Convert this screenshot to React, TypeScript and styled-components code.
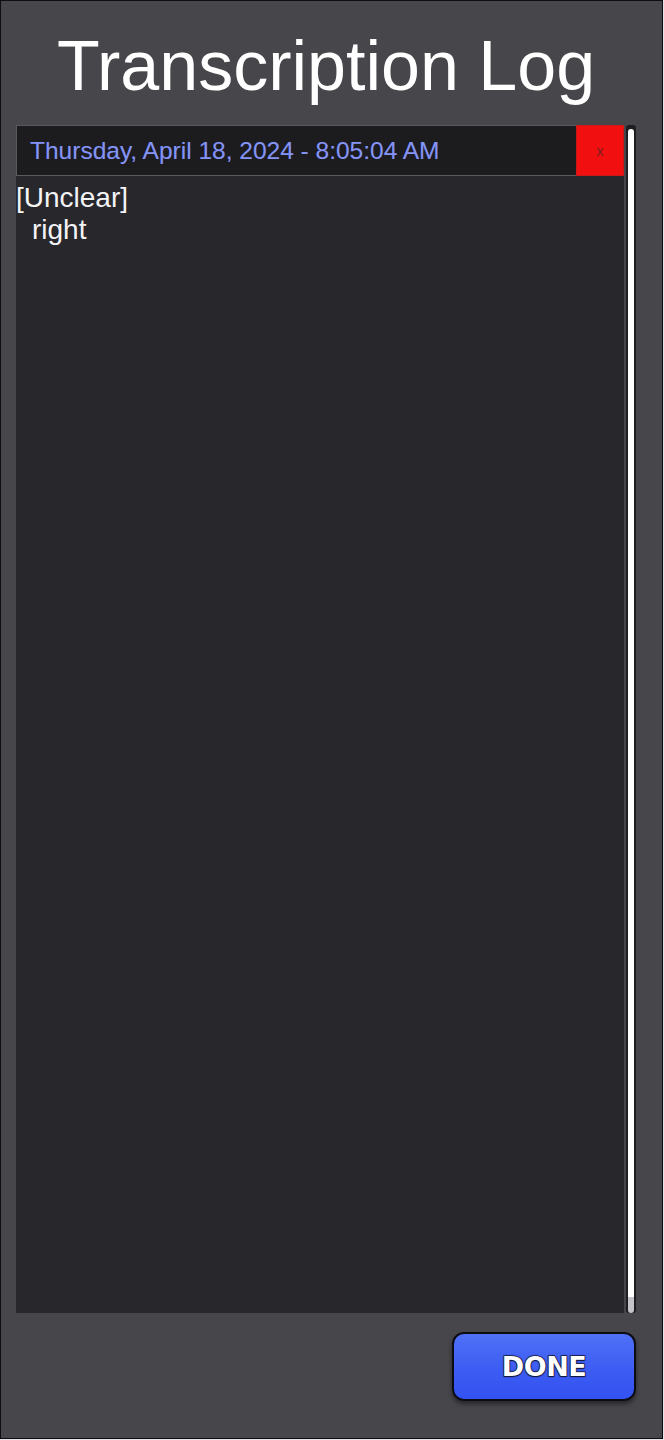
import React from 'react';
import styled, { createGlobalStyle } from 'styled-components';

const GlobalStyle = createGlobalStyle`
  html, body {
    margin: 0;
    padding: 0;
    background: #e4e4ea;
  }
  body {
    font-family: 'Liberation Sans', Arial, sans-serif;
  }
`;

const Page = styled.div`
  box-sizing: border-box;
  width: 663px;
  height: 1439px;
  background: #47464b;
  border: 1px solid #0e0e10;
  display: flex;
  flex-direction: column;
  padding: 0 26px 0 15px;
`;

const Title = styled.h1`
  margin: 0;
  padding: 24px 0 18px;
  text-align: center;
  color: #ffffff;
  font-weight: 400;
  font-size: 70px;
  line-height: 82px;
`;

const Panel = styled.div`
  display: flex;
  align-items: stretch;
  gap: 2px;
  height: 1188px;
`;

const List = styled.div`
  flex: 1;
  display: flex;
  flex-direction: column;
  background: #28272c;
`;

const EntryHeader = styled.div`
  box-sizing: border-box;
  height: 51px;
  display: flex;
  align-items: center;
  background: #1c1c1e;
  border: 1px solid #5a5a5e;
`;

const DateLabel = styled.div`
  flex: 1;
  padding-left: 13px;
  color: #8594f2;
  font-size: 24.5px;
  text-shadow: 0 0 1px #2a2f66;
`;

const CloseButton = styled.button`
  box-sizing: border-box;
  width: 48px;
  height: 51px;
  margin: -1px -1px -1px 0;
  border: 1px solid #c81818;
  background: #f10f0f;
  color: #7a2020;
  font-family: 'Liberation Sans', Arial, sans-serif;
  font-size: 14px;
  padding: 0;
  cursor: pointer;
`;

const EntryBody = styled.div`
  padding: 6px 0 0 0;
  color: #f4f4f6;
  font-size: 28px;
  line-height: 32px;
`;

const Line = styled.div<{ indent?: number }>`
  padding-left: ${({ indent }) => indent ?? 0}px;
`;

const ScrollTrack = styled.div`
  width: 10px;
  background: #1e1e21;
  border-radius: 3px;
  display: flex;
  flex-direction: column;
  padding: 4px 2px 0;
  box-sizing: border-box;
`;

const ScrollThumb = styled.div`
  flex: 1;
  background: #ffffff;
  border-radius: 4px 4px 0 0;
`;

const ScrollEnd = styled.div`
  height: 16px;
  background: #c4c4c8;
  border-radius: 0 0 4px 4px;
`;

const Footer = styled.div`
  display: flex;
  justify-content: flex-end;
  padding-top: 19px;
`;

const DoneButton = styled.button`
  box-sizing: border-box;
  width: 184px;
  height: 69px;
  border: 2px solid #0c0c14;
  border-radius: 12px;
  background: linear-gradient(180deg, #4f70f6 0%, #3d5cf3 55%, #3352f0 100%);
  box-shadow: 0 3px 4px rgba(0, 0, 0, 0.45);
  color: #ffffff;
  font-family: 'DejaVu Sans', Verdana, sans-serif;
  font-weight: 700;
  font-size: 27px;
  letter-spacing: -0.5px;
  -webkit-text-stroke: 1.5px #141a3a;
  paint-order: stroke fill;
  text-shadow: 0 0 2px #141a40, 0 1px 1px #141a40;
  cursor: pointer;
`;

export default function App() {
  return (
    <>
      <GlobalStyle />
      <Page>
        <Title>Transcription Log</Title>
        <Panel>
          <List>
            <EntryHeader>
              <DateLabel>Thursday, April 18, 2024 - 8:05:04 AM</DateLabel>
              <CloseButton>x</CloseButton>
            </EntryHeader>
            <EntryBody>
              <Line>[Unclear]</Line>
              <Line indent={16}>right</Line>
            </EntryBody>
          </List>
          <ScrollTrack>
            <ScrollThumb />
            <ScrollEnd />
          </ScrollTrack>
        </Panel>
        <Footer>
          <DoneButton>DONE</DoneButton>
        </Footer>
      </Page>
    </>
  );
}
